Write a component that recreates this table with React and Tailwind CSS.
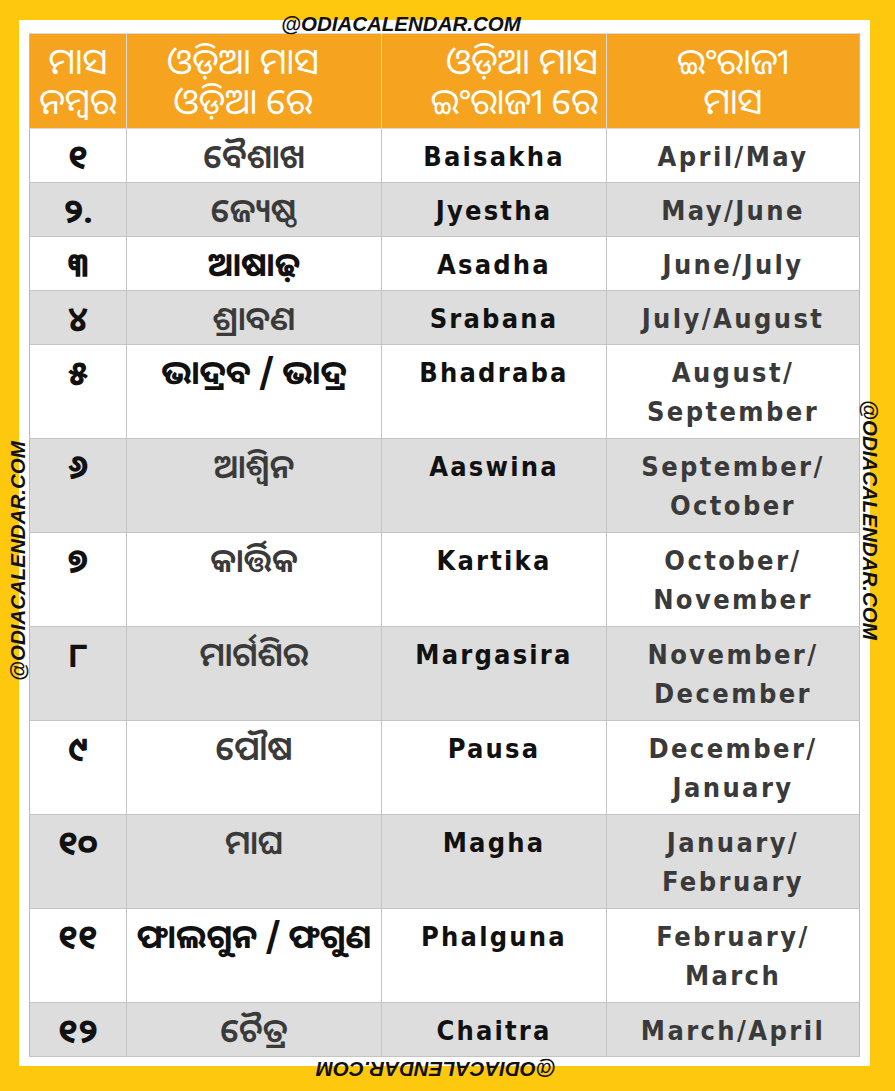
const rows = [
  { num: "୧", odia: "ବୈଶାଖ", eng: "Baisakha", month: ["April/May"] },
  { num: "୨.", odia: "ଜ୍ୟେଷ୍ଠ", eng: "Jyestha", month: ["May/June"] },
  { num: "୩", odia: "ଆଷାଢ଼", eng: "Asadha", month: ["June/July"], dark: true },
  { num: "୪", odia: "ଶ୍ରାବଣ", eng: "Srabana", month: ["July/August"] },
  { num: "୫", odia: "ଭାଦ୍ରବ / ଭାଦ୍ର", eng: "Bhadraba", month: ["August/", "September"], dark: true },
  { num: "୬", odia: "ଆଶ୍ୱିନ", eng: "Aaswina", month: ["September/", "October"] },
  { num: "୭", odia: "କାର୍ତ୍ତିକ", eng: "Kartika", month: ["October/", "November"] },
  { num: "୮", odia: "ମାର୍ଗଶିର", eng: "Margasira", month: ["November/", "December"] },
  { num: "୯", odia: "ପୌଷ", eng: "Pausa", month: ["December/", "January"] },
  { num: "୧୦", odia: "ମାଘ", eng: "Magha", month: ["January/", "February"] },
  { num: "୧୧", odia: "ଫାଲଗୁନ / ଫଗୁଣ", eng: "Phalguna", month: ["February/", "March"], dark: true },
  { num: "୧୨", odia: "ଚୈତ୍ର", eng: "Chaitra", month: ["March/April"] },
];

const odiaFont = "font-['Noto_Sans_Oriya','Noto_Sans','DejaVu_Sans',sans-serif]";
const engFont = "font-['DejaVu_Sans_Condensed','DejaVu_Sans',sans-serif] font-stretch-condensed";

function Watermark({ className }) {
  return (
    <div
      className={
        "absolute whitespace-nowrap font-['Liberation_Sans',sans-serif] font-bold italic text-[20.5px] leading-none text-[#111] " +
        className
      }
    >
      @ODIACALENDAR.COM
    </div>
  );
}

export default function App() {
  return (
    <div className="relative w-[895px] h-[1091px] bg-[#fec80f] pt-[20px] pl-[19px]">
      <div className="w-[851px] h-[1046px] bg-white pt-[13px] pl-[10px]">
        <table className="border-collapse w-[830px] table-fixed">
          <colgroup>
            <col className="w-[97px]" />
            <col className="w-[255px]" />
            <col className="w-[225px]" />
            <col className="w-[253px]" />
          </colgroup>
          <thead>
            <tr className={"h-[95px] bg-[#f6a41f] text-white text-[36px] leading-[40px] " + odiaFont}>
              <th className="border border-[#d8d8d8] border-l-[#e0b86a] font-normal text-center">
                ମାସ
                <br />
                ନମ୍ବର
              </th>
              <th className="border border-[#d8d8d8] font-normal text-center pr-[22px]">
                ଓଡ଼ିଆ ମାସ
                <br />
                ଓଡ଼ିଆ ରେ
              </th>
              <th className="border border-[#d8d8d8] font-normal text-right pr-[8px]">
                ଓଡ଼ିଆ ମାସ
                <br />
                ଇଂରାଜୀ ରେ
              </th>
              <th className="border border-[#d8d8d8] border-r-[#e0b86a] font-normal text-center">
                ଇଂରାଜୀ
                <br />
                ମାସ
              </th>
            </tr>
          </thead>
          <tbody>
            {rows.map((r, i) => (
              <tr
                key={i}
                className={
                  (i % 2 === 1 ? "bg-[#dddddd] " : "bg-white ") +
                  (r.month.length > 1 ? "h-[94px]" : "h-[54px]")
                }
              >
                <td className={"border border-[#c4c4c4] border-l-[#d6b577] align-top text-center pt-[7px] text-[34px] leading-[40px] font-bold text-[#111] " + odiaFont}>
                  {r.num}
                </td>
                <td
                  className={
                    "border border-[#c4c4c4] align-top text-center pt-[7px] text-[33px] leading-[40px] " +
                    (r.dark ? "text-[#111] font-bold " : "text-[#3a3a3a] font-semibold ") +
                    odiaFont
                  }
                >
                  {r.odia}
                </td>
                <td className={"border border-[#c4c4c4] align-top text-center pt-[8px] text-[27px] leading-[40px] font-bold tracking-[2.2px] text-[#111] " + engFont}>
                  {r.eng}
                </td>
                <td className={"border border-[#c4c4c4] border-r-[#d6b577] align-top text-center pt-[8px] text-[27px] leading-[39px] font-bold tracking-[2.4px] text-[#3a3a3a] " + engFont}>
                  {r.month.map((m, j) => (
                    <div key={j}>{m}</div>
                  ))}
                </td>
              </tr>
            ))}
          </tbody>
        </table>
      </div>

      <Watermark className="left-[281px] top-[14px]" />
      <Watermark className="left-[880px] top-[400px] origin-top-left rotate-90" />
      <Watermark className="left-[8px] top-[681px] origin-top-left -rotate-90" />
      <Watermark className="left-[556px] top-[1079px] origin-top-left rotate-180" />
    </div>
  );
}
